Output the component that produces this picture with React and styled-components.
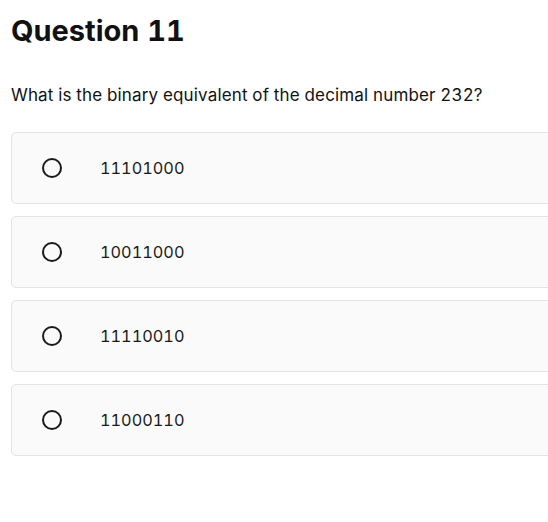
import React from 'react'
import styled, { createGlobalStyle } from 'styled-components'

const Global = createGlobalStyle`
    body {
        margin: 0;
        background: #ffffff;
        font-family: Inter, "Noto Sans", sans-serif;
        font-variant-numeric: tabular-nums;
        color: #111111;
    }
`;

const Page = styled.div`
    width: 548px;
    height: 522px;
    overflow: hidden;
    padding: 14px 0 0 11px;
    box-sizing: border-box;
`;

const Title = styled.h1`
    font-size: 29px;
    font-weight: 700;
    margin: 0;
    line-height: 34px;
`;

const Prompt = styled.p`
    font-size: 17px;
    letter-spacing: 0.15px;
    margin: 36px 0 0 0;
    line-height: 22px;
`;

const Options = styled.div`
    display: flex;
    flex-direction: column;
    gap: 12px;
    margin-top: 26px;
`;

const Option = styled.label`
    display: flex;
    align-items: center;
    width: 600px;
    height: 72px;
    box-sizing: border-box;
    border: 1px solid #e1e4e8;
    border-radius: 5px;
    background: #fafafa;
    padding-left: 30px;
    cursor: pointer;
`;

const Radio = styled.span`
    width: 20px;
    height: 20px;
    box-sizing: border-box;
    border: 2px solid #1a1a1a;
    border-radius: 50%;
    flex-shrink: 0;
`;

const OptionText = styled.span`
    font-size: 16.3px;
    margin-left: 38px;
    color: #1a1a1a;
`;

const answers = ['11101000', '10011000', '11110010', '11000110']

export default function App() {
    return (
        <Page>
            <Global />
            <Title>Question 11</Title>
            <Prompt>What is the binary equivalent of the decimal number 232?</Prompt>
            <Options>
                {answers.map(a => (
                    <Option key={a}>
                        <Radio />
                        <OptionText>{a}</OptionText>
                    </Option>
                ))}
            </Options>
        </Page>
    )
}
